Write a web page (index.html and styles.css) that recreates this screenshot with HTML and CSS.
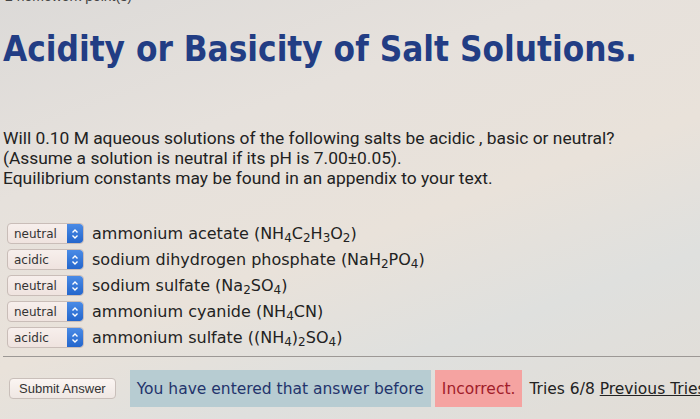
FILE: index.html
```html
<!DOCTYPE html>
<html>
<head>
<meta charset="utf-8">
<link rel="stylesheet" href="styles.css">
</head>
<body>
<div class="page">
  <div class="topline">2 homework point(s)</div>
  <h1 class="title">Acidity or Basicity of Salt Solutions.</h1>
  <p class="question">Will 0.10 M aqueous solutions of the following salts be acidic , basic or neutral?<br>(Assume a solution is neutral if its pH is 7.00±0.05).<br>Equilibrium constants may be found in an appendix to your text.</p>
  <div class="rows">
    <div class="row"><div class="sel"><span class="val">neutral</span><span class="arr"><svg viewBox="0 0 10 14" width="10" height="14"><path d="M2.5 5.5 L5 3 L7.5 5.5 M2.5 8.5 L5 11 L7.5 8.5" fill="none" stroke="#fff" stroke-width="1.4"/></svg></span></div><span class="lbl">ammonium acetate (NH<sub>4</sub>C<sub>2</sub>H<sub>3</sub>O<sub>2</sub>)</span></div>
    <div class="row"><div class="sel"><span class="val">acidic</span><span class="arr"><svg viewBox="0 0 10 14" width="10" height="14"><path d="M2.5 5.5 L5 3 L7.5 5.5 M2.5 8.5 L5 11 L7.5 8.5" fill="none" stroke="#fff" stroke-width="1.4"/></svg></span></div><span class="lbl">sodium dihydrogen phosphate (NaH<sub>2</sub>PO<sub>4</sub>)</span></div>
    <div class="row"><div class="sel"><span class="val">neutral</span><span class="arr"><svg viewBox="0 0 10 14" width="10" height="14"><path d="M2.5 5.5 L5 3 L7.5 5.5 M2.5 8.5 L5 11 L7.5 8.5" fill="none" stroke="#fff" stroke-width="1.4"/></svg></span></div><span class="lbl">sodium sulfate (Na<sub>2</sub>SO<sub>4</sub>)</span></div>
    <div class="row"><div class="sel"><span class="val">neutral</span><span class="arr"><svg viewBox="0 0 10 14" width="10" height="14"><path d="M2.5 5.5 L5 3 L7.5 5.5 M2.5 8.5 L5 11 L7.5 8.5" fill="none" stroke="#fff" stroke-width="1.4"/></svg></span></div><span class="lbl">ammonium cyanide (NH<sub>4</sub>CN)</span></div>
    <div class="row"><div class="sel"><span class="val">acidic</span><span class="arr"><svg viewBox="0 0 10 14" width="10" height="14"><path d="M2.5 5.5 L5 3 L7.5 5.5 M2.5 8.5 L5 11 L7.5 8.5" fill="none" stroke="#fff" stroke-width="1.4"/></svg></span></div><span class="lbl">ammonium sulfate ((NH<sub>4</sub>)<sub>2</sub>SO<sub>4</sub>)</span></div>
  </div>
  <hr class="sep">
  <div class="actions">
    <button class="submit">Submit Answer</button>
    <span class="msg-before">You have entered that answer before</span>
    <span class="msg-bad">Incorrect.</span>
    <span class="tries">Tries 6/8 <span class="prev">Previous Tries</span></span>
  </div>
</div>
</body>
</html>
```
FILE: styles.css
```css
html, body {
  margin: 0;
  padding: 0;
}
body {
  width: 700px;
  height: 419px;
  overflow: hidden;
  background: linear-gradient(160deg, #dcdad8 0%, #e6e1dc 30%, #e9e2da 55%, #dfe0de 75%, #e2ddd6 100%);
  font-family: "DejaVu Sans", Verdana, sans-serif;
  color: #222;
}
.page {
  padding-left: 3px;
}
.topline {
  font-family: "Liberation Sans", Arial, sans-serif;
  font-size: 14px;
  line-height: 16px;
  margin-top: -12px;
  color: #444;
  padding-left: 2px;
}
.title {
  margin: 23px 0 0 0;
  font-family: "DejaVu Sans Condensed", "DejaVu Sans", Verdana, sans-serif;
  font-stretch: condensed;
  font-weight: bold;
  font-size: 34.8px;
  line-height: 44px;
  color: #223d84;
  white-space: nowrap;
}
.question {
  margin: 57px 0 0 0;
  font-family: Roboto, "Liberation Sans", Arial, sans-serif;
  font-size: 17.4px;
  line-height: 20px;
  color: #222;
}
.rows {
  margin-top: 35px;
  padding-left: 4px;
  display: flex;
  flex-direction: column;
  gap: 5px;
}
.row {
  display: flex;
  align-items: center;
  height: 21px;
}
.sel {
  width: 77px;
  height: 21px;
  box-sizing: border-box;
  border: 1px solid #c9bdb8;
  border-radius: 4px;
  background: linear-gradient(#f7efec, #efe3df);
  display: flex;
  align-items: center;
  justify-content: space-between;
  overflow: hidden;
}
.val {
  font-family: "DejaVu Sans", Verdana, sans-serif;
  font-size: 12px;
  padding-left: 6px;
  color: #333;
}
.arr {
  width: 16px;
  height: 19px;
  background: linear-gradient(#4a8be6, #2466cc);
  border-radius: 0 3px 3px 0;
  display: flex;
  align-items: center;
  justify-content: center;
}
.lbl {
  margin-left: 8px;
  font-size: 16px;
  color: #222;
}
.lbl sub {
  font-size: 12px;
  vertical-align: -3px;
  line-height: 0;
}
.sep {
  margin: 8px 0 0 0;
  border: none;
  border-top: 1px solid #9c9895;
  height: 0;
}
.actions {
  margin-top: 13px;
  display: flex;
  align-items: center;
  gap: 0;
  white-space: nowrap;
}
.actions > * {
  flex-shrink: 0;
}
.submit {
  margin-left: 6px;
  height: 21px;
  padding: 0 9px;
  font-family: "Liberation Sans", Arial, sans-serif;
  font-size: 13px;
  color: #333;
  background: linear-gradient(#fbf5f2, #efe7e3);
  border: 1px solid #c9bfba;
  border-radius: 4px;
  white-space: nowrap;
}
.msg-before {
  margin-left: 14px;
  background: #b7ccd2;
  color: #23346c;
  height: 37px;
  padding: 0 7px;
  display: flex;
  align-items: center;
  font-size: 15.5px;
}
.msg-bad {
  margin-left: 4px;
  background: #f5a3a1;
  color: #a11d2a;
  height: 37px;
  padding: 0 7px;
  display: flex;
  align-items: center;
  font-size: 15.5px;
}
.tries {
  margin-left: 7px;
  font-size: 15.5px;
  color: #222;
}
.prev {
  text-decoration: underline;
}
```
